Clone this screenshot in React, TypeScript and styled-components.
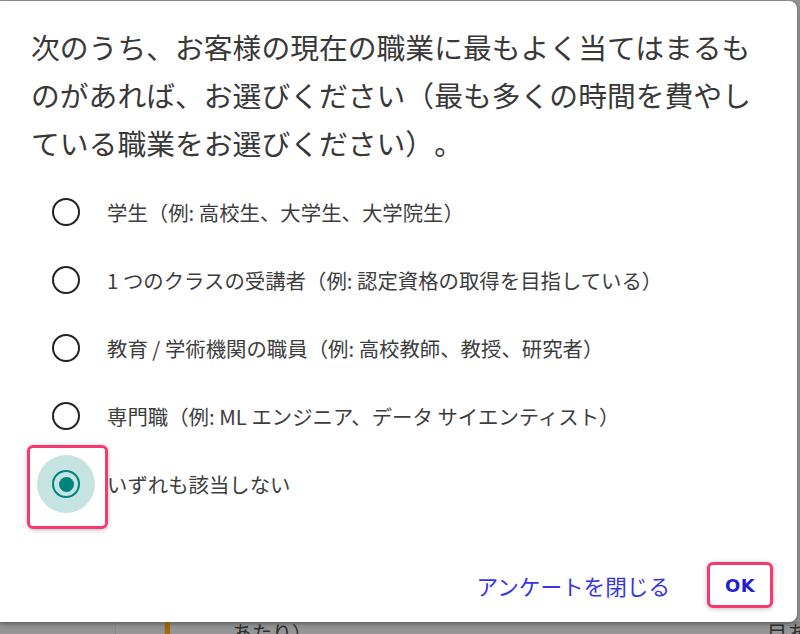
import React, { useState } from "react";
import styled, { createGlobalStyle } from "styled-components";

const GlobalStyle = createGlobalStyle`
  html, body {
    margin: 0;
    padding: 0;
    width: 800px;
    height: 634px;
    overflow: hidden;
    font-family: "Noto Sans CJK JP", "Noto Sans", sans-serif;
  }
`;

type OptionProps = {
  selected?: boolean;
};

const Page = styled.div`
  position: relative;
  width: 800px;
  height: 634px;
  background: #939393;
  display: flex;
  flex-direction: column;
  justify-content: flex-end;
  overflow: hidden;
`;

const BehindRow = styled.div`
  display: flex;
  align-items: flex-start;
  height: 12px;
  overflow: hidden;
  background: linear-gradient(#7d7d7d, #959595 4px);
`;

const BehindCell = styled.div<{ width: number }>`
  width: ${(props) => props.width}px;
  flex-shrink: 0;
  height: 12px;
  border-right: 1px solid #8a8a8a;
`;

const OrangeBar = styled.div`
  width: 5px;
  height: 12px;
  background: #a36a06;
  flex-shrink: 0;
`;

const BehindText = styled.div<{ offset: number }>`
  margin-left: ${(props) => props.offset}px;
  font-size: 20px;
  line-height: 20px;
  color: #2f2f2f;
  margin-top: 1px;
  white-space: nowrap;
`;

const Dialog = styled.div`
  position: absolute;
  top: 1px;
  left: 0;
  width: 797px;
  height: 621px;
  background: #ffffff;
  border-radius: 0 8px 8px 0;
  box-shadow: 0 2px 6px rgba(0, 0, 0, 0.25);
  box-sizing: border-box;
  padding: 22px 20px 0 31px;
  display: flex;
  flex-direction: column;
`;

const Question = styled.p`
  margin: 0;
  font-size: 28.8px;
  line-height: 48px;
  color: #383838;
  font-weight: 400;
  white-space: nowrap;
  text-spacing-trim: space-all;
`;

const OptionList = styled.div`
  display: flex;
  flex-direction: column;
  margin-top: 11px;
`;

const OptionRow = styled.label`
  display: flex;
  align-items: center;
  height: 68px;
  cursor: pointer;
  position: relative;
`;

const RadioHalo = styled.span<OptionProps>`
  width: 58px;
  height: 58px;
  margin-left: 6px;
  border-radius: 50%;
  display: flex;
  align-items: center;
  justify-content: center;
  background: ${(props) => (props.selected ? "#c5e3e1" : "transparent")};
  flex-shrink: 0;
`;

const RadioRing = styled.span<OptionProps>`
  width: 28px;
  height: 28px;
  box-sizing: border-box;
  border-radius: 50%;
  border: 2.5px solid ${(props) => (props.selected ? "#00837a" : "#222222")};
  display: flex;
  align-items: center;
  justify-content: center;
`;

const RadioDot = styled.span`
  width: 15px;
  height: 15px;
  border-radius: 50%;
  background: #00837a;
`;

const FocusMark = styled.span`
  position: absolute;
  left: -4px;
  top: -5px;
  width: 81px;
  height: 84px;
  box-sizing: border-box;
  border: 3px solid #fb3770;
  border-radius: 6px;
  box-shadow: 0 1px 5px rgba(0, 0, 0, 0.25);
  pointer-events: none;
`;

const OptionText = styled.span`
  margin-left: 12px;
  font-size: 20.4px;
  color: #3d3d3d;
  white-space: nowrap;
`;

const Footer = styled.div`
  display: flex;
  justify-content: flex-end;
  align-items: center;
  margin-top: 44px;
  margin-right: 4px;
  gap: 37px;
`;

const TextButton = styled.button`
  border: none;
  background: none;
  padding: 0;
  font-family: inherit;
  font-size: 21.6px;
  color: #3434e8;
  cursor: pointer;
`;

const OkButton = styled.button`
  width: 66px;
  height: 46px;
  box-sizing: border-box;
  border: 3px solid #fb3770;
  border-radius: 6px;
  background: #ffffff;
  box-shadow: 0 1px 5px rgba(0, 0, 0, 0.25);
  font-family: "DejaVu Sans", "Noto Sans", sans-serif;
  font-weight: 700;
  font-size: 18px;
  color: #1f1fd6;
  letter-spacing: 0.5px;
  padding: 0;
  cursor: pointer;
`;

const options = [
  "学生（例: 高校生、大学生、大学院生）",
  "1 つのクラスの受講者（例: 認定資格の取得を目指している）",
  "教育 / 学術機関の職員（例: 高校教師、教授、研究者）",
  "専門職（例: ML エンジニア、データ サイエンティスト）",
  "いずれも該当しない",
];

const App: React.FC = () => {
  const [selected, setSelected] = useState(4);

  return (
    <>
      <GlobalStyle />
      <Page>
        <BehindRow>
          <BehindCell width={115} />
          <BehindCell width={48} />
          <OrangeBar />
          <BehindText offset={62}>あたり）</BehindText>
          <BehindText offset={455}>目あた</BehindText>
        </BehindRow>
        <Dialog>
          <Question>
            次のうち、お客様の現在の職業に最もよく当てはまるも
            <br />
            のがあれば、お選びください（最も多くの時間を費やし
            <br />
            ている職業をお選びください）。
          </Question>
          <OptionList>
            {options.map((text, i) => {
              const isSel = i === selected;
              return (
                <OptionRow key={text} onClick={() => setSelected(i)}>
                  <RadioHalo selected={isSel}>
                    <RadioRing selected={isSel}>{isSel && <RadioDot />}</RadioRing>
                  </RadioHalo>
                  {isSel && <FocusMark />}
                  <OptionText>{text}</OptionText>
                </OptionRow>
              );
            })}
          </OptionList>
          <Footer>
            <TextButton>アンケートを閉じる</TextButton>
            <OkButton>OK</OkButton>
          </Footer>
        </Dialog>
      </Page>
    </>
  );
};

export default App;
